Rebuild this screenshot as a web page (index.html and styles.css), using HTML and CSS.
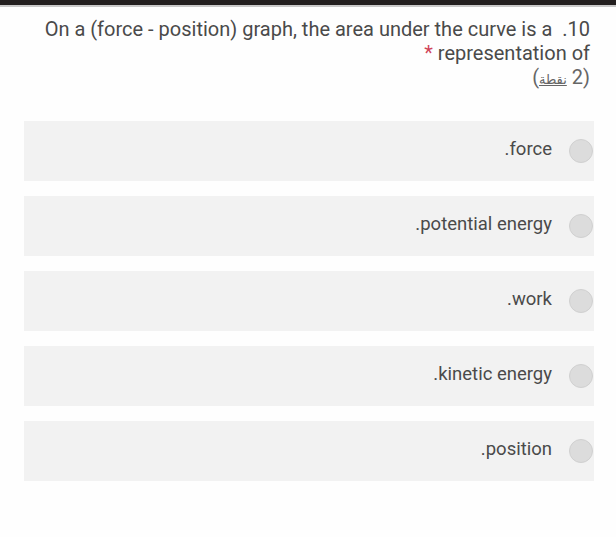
FILE: index.html
```html
<!DOCTYPE html>
<html lang="en">
<head>
<meta charset="utf-8">
<link rel="stylesheet" href="styles.css">
</head>
<body>
<div class="topbar"></div>
<div class="question" dir="rtl">
  <div class="q-title">10.&nbsp; On a (force - position) graph, the area under the curve is a<br>representation of <span class="req">*</span></div>
  <div class="q-points">(2 <span class="ar">نقطة</span>)</div>
</div>
<div class="options" dir="rtl">
  <label class="option"><span class="radio"></span><span class="opt-text">force.</span></label>
  <label class="option"><span class="radio"></span><span class="opt-text">potential energy.</span></label>
  <label class="option"><span class="radio"></span><span class="opt-text">work.</span></label>
  <label class="option"><span class="radio"></span><span class="opt-text">kinetic energy.</span></label>
  <label class="option"><span class="radio"></span><span class="opt-text">position.</span></label>
</div>
</body>
</html>
```
FILE: styles.css
```css
html, body {
  margin: 0;
  padding: 0;
  background: #fefefe;
}
body {
  font-family: Roboto, "DejaVu Sans", sans-serif;
  color: #4a4a4a;
  width: 616px;
  height: 537px;
  overflow: hidden;
}
.topbar {
  height: 5px;
  background: #231f1f;
  border-bottom: 2px solid #c9c9c9;
}
.question {
  padding: 10px 26px 0 20px;
  font-size: 20px;
  line-height: 24px;
}
.req {
  color: #d0445a;
}
.q-points {
  color: #666;
}
.ar {
  font-family: "DejaVu Sans", sans-serif;
  font-size: 13px;
  text-decoration: underline;
}
.options {
  margin: 29px 22px 0 24px;
  display: flex;
  flex-direction: column;
  gap: 15px;
}
.option {
  height: 60px;
  background: #f2f2f2;
  display: flex;
  align-items: center;
  padding-right: 1px;
  font-size: 18.5px;
}
.radio {
  width: 24px;
  height: 24px;
  box-sizing: border-box;
  border-radius: 50%;
  background: #dcdcdc;
  border: 1px solid #d0d0d0;
  margin-left: 17px;
}
.opt-text {
  position: relative;
  top: -2px;
}
```
